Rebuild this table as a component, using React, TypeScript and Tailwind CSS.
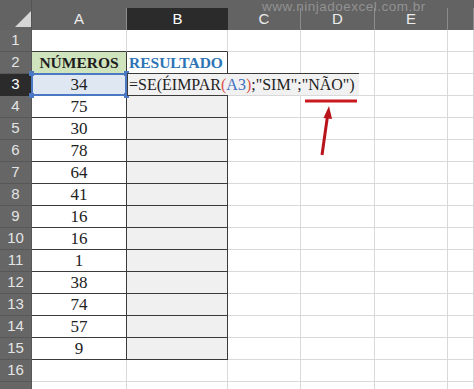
const COLS = [
  { key: 'A', w: 'w-[95px]' },
  { key: 'B', w: 'w-[101px]' },
  { key: 'C', w: 'w-[73px]' },
  { key: 'D', w: 'w-[74px]' },
  { key: 'E', w: 'w-[73px]' },
  { key: 'F', w: 'w-[26px]' },
];

const NUMEROS: Record<number, number> = {
  3: 34, 4: 75, 5: 30, 6: 78, 7: 64, 8: 41, 9: 16, 10: 16, 11: 1, 12: 38, 13: 74, 14: 57, 15: 9,
};

const ROWS = Array.from({ length: 17 }, (_, i) => i + 1);

const serif = "font-['Liberation_Serif',serif]";
const sans = "font-['Liberation_Sans',Arial,sans-serif]";

function ColumnHeader() {
  return (
    <div className={`flex h-[30px] bg-[#636363] ${sans}`}>
      {/* select-all corner */}
      <div className="w-[32px] h-full relative border-r border-[#555]">
        <svg className="absolute left-[15px] top-[11px]" width="16" height="16" viewBox="0 0 16 16">
          <polygon points="16,0 16,16 0,16" fill="#d6d6d6" />
        </svg>
      </div>
      {COLS.map((c) => {
        const active = c.key === 'B';
        return (
          <div key={c.key} className={`${c.w} h-full flex flex-col`}>
            <div className="h-[8px]" />
            <div
              className={`flex-1 flex items-center justify-center text-[15px] ${
                active ? 'bg-[#2b2b2b] text-white' : 'text-[#ececec] border-r border-[#8c8c8c]'
              }`}
            >
              {c.key === 'F' ? '' : c.key}
            </div>
          </div>
        );
      })}
    </div>
  );
}

function Cell({ row, col }: { row: number; col: string }) {
  const inTable = row >= 2 && row <= 15 && (col === 'A' || col === 'B');
  const aboveTable = row === 1 && (col === 'A' || col === 'B');
  const w = COLS.find((c) => c.key === col)!.w;

  let cls = `${w} h-full shrink-0 border-r border-b border-[#d9d9d9]`;
  if (inTable) cls = `${w} h-full shrink-0 border-r border-b border-[#3a3a3a]`;
  if (aboveTable) cls = `${w} h-full shrink-0 border-r border-b border-r-[#d9d9d9] border-b-[#3a3a3a]`;

  if (row === 2 && col === 'A') {
    return (
      <div className={`${cls} bg-[#cfe3bd] flex items-center justify-center font-bold text-[15.5px] text-[#1e1e1e] ${serif}`}>
        NÚMEROS
      </div>
    );
  }
  if (row === 2 && col === 'B') {
    return (
      <div className={`${cls} bg-white flex items-center pl-[2px] font-bold text-[15.5px] text-[#2e74b5] ${serif}`}>
        RESULTADO
      </div>
    );
  }
  if (row === 3 && col === 'A') {
    return (
      <div className={`${cls} relative bg-[#dfe7f2] flex items-center justify-center text-[17px] text-[#222] ${serif}`}>
        {NUMEROS[row]}
        {/* range reference highlight */}
        <div className="absolute -left-px -top-px -right-px -bottom-px border-2 border-[#4a78c2]" />
        <span className="absolute -left-[3px] -top-[3px] w-[5px] h-[5px] bg-[#4a78c2]" />
        <span className="absolute -right-[3px] -top-[3px] w-[5px] h-[5px] bg-[#4a78c2]" />
        <span className="absolute -left-[3px] -bottom-[3px] w-[5px] h-[5px] bg-[#4a78c2]" />
        <span className="absolute -right-[3px] -bottom-[3px] w-[5px] h-[5px] bg-[#4a78c2]" />
      </div>
    );
  }
  if (row === 3 && col === 'B') {
    return (
      <div className={`${cls} relative`}>
        {/* in-cell editor spilling over C and D */}
        <div
          className={`absolute z-10 left-0 -top-px h-[22px] w-[232px] bg-[#f1f1f1] border-t border-l border-[#3a3a3a] flex items-center pl-[1px] whitespace-nowrap text-[16px] text-[#1e1e1e] ${serif}`}
        >
          =SE(ÉIMPAR<span className="text-[#d9534f]">(</span>
          <span className="text-[#3f6fbf]">A3</span>
          <span className="text-[#d9534f]">)</span>;"SIM";"NÃO")
        </div>
      </div>
    );
  }
  if (row >= 3 && row <= 15 && col === 'A') {
    return (
      <div className={`${cls} bg-white flex items-center justify-center text-[17px] text-[#222] ${serif}`}>
        {NUMEROS[row]}
      </div>
    );
  }
  if (row >= 4 && row <= 15 && col === 'B') {
    return <div className={`${cls} bg-[#f0f0f0]`} />;
  }
  return <div className={`${cls} bg-white`} />;
}

function Row({ row }: { row: number }) {
  const active = row === 3;
  return (
    <div className="flex h-[22px]">
      <div
        className={`w-[32px] h-full shrink-0 flex items-center justify-center text-[15px] border-b border-r ${sans} ${
          active ? 'bg-[#2b2b2b] text-white border-[#2b2b2b]' : 'bg-[#666] text-[#e4e4e4] border-[#575757]'
        }`}
      >
        {row < 17 ? row : ''}
      </div>
      {COLS.map((c) => (
        <Cell key={c.key} row={row} col={c.key} />
      ))}
    </div>
  );
}

export default function App() {
  return (
    <div className="relative w-[474px] h-[389px] overflow-hidden bg-white">
      <ColumnHeader />
      {ROWS.map((r) => (
        <Row key={r} row={r} />
      ))}

      {/* site watermark */}
      <div className={`absolute left-[262px] top-0 leading-[13px] text-[13.5px] tracking-[0.5px] text-[#a8a8a8]/70 ${sans}`}>
        www.ninjadoexcel.com.br
      </div>

      {/* red underline and pointer */}
      <svg className="absolute left-0 top-0 pointer-events-none" width="474" height="389">
        <line x1="305" y1="101" x2="357" y2="101" stroke="#c8191f" strokeWidth="3" />
        <line x1="322" y1="155" x2="327.5" y2="116" stroke="#b8141b" strokeWidth="3" />
        <polygon points="329,106 323.5,118 332,119" fill="#b8141b" />
      </svg>
    </div>
  );
}
